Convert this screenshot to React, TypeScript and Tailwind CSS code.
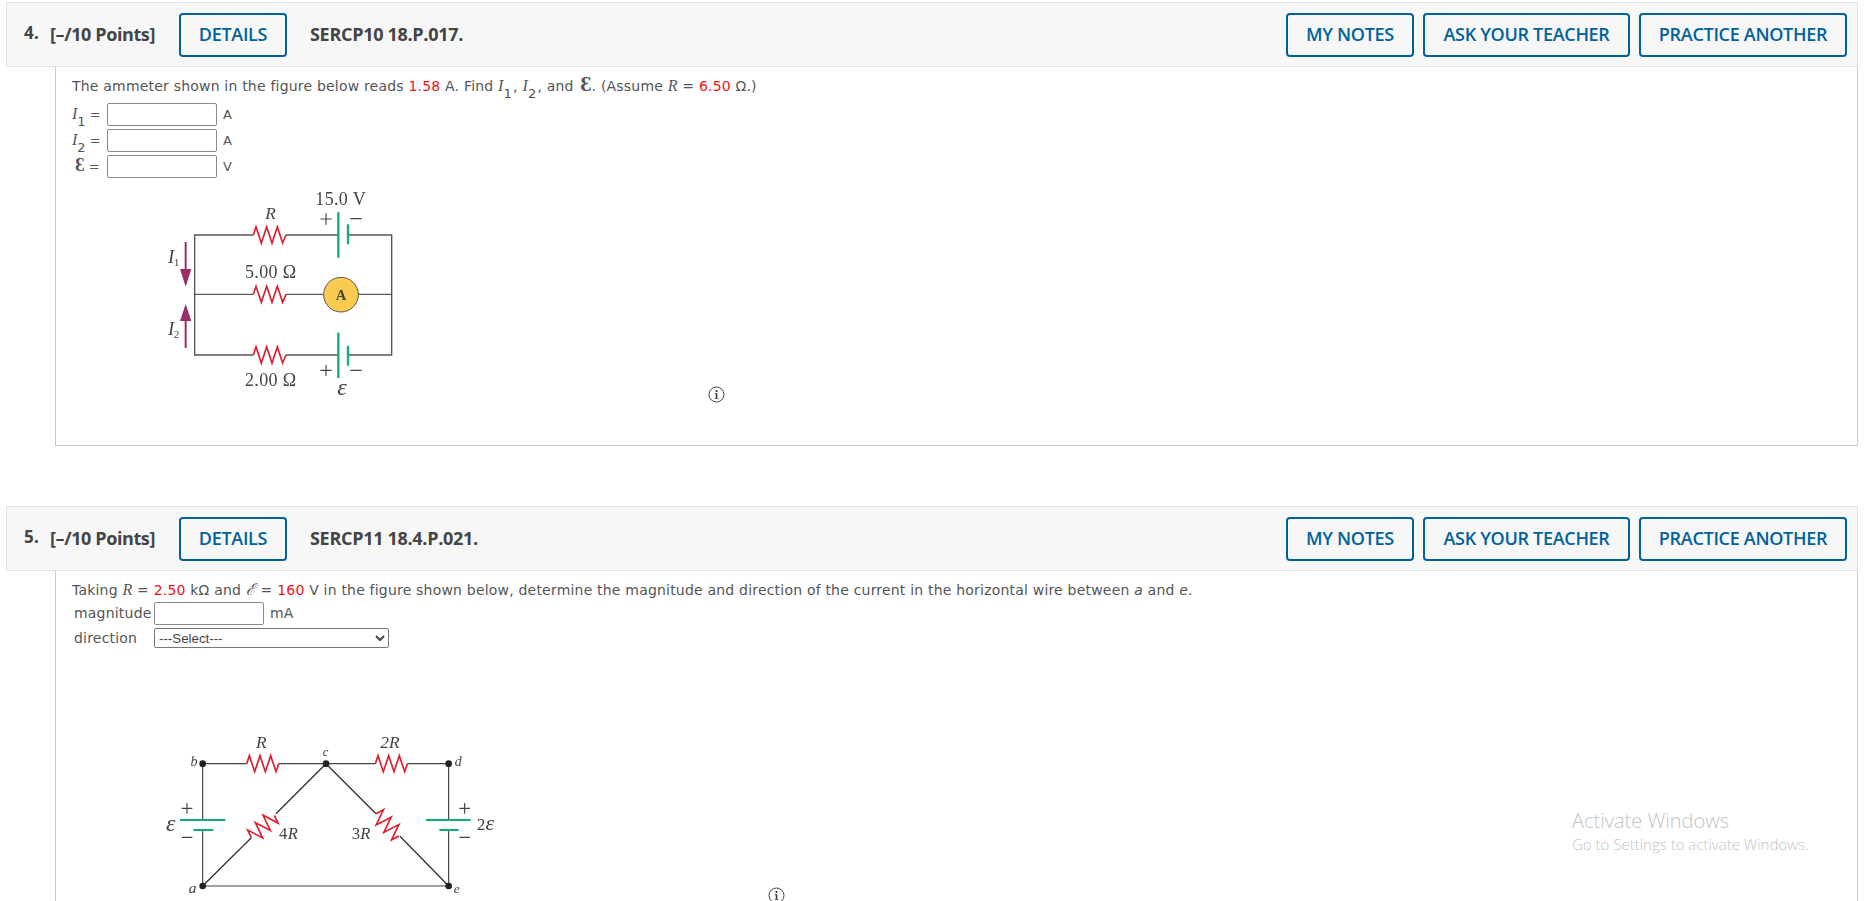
import React from "react";

const OS = "[font-family:'Open_Sans',sans-serif]";
const V = "[font-family:'DejaVu_Sans',sans-serif]";
const SERIF = "'Liberation Serif', 'DejaVu Serif', serif";

function Btn({ children, w }: { children: React.ReactNode; w: string }) {
  return (
    <button className={`${w} h-[44px] border-2 border-[#00629b] rounded-[4px] text-[#00629b] text-[18px] font-semibold flex items-center justify-center tracking-[-0.3px]`}>
      {children}
    </button>
  );
}

function Header({ n, code }: { n: string; code: string }) {
  return (
    <div className={`ml-[6px] mr-[16px] h-[65px] bg-[#f7f7f7] border border-[#e2e2e2] flex items-center text-[#444] ${OS}`}>
      <span className="ml-[17px] w-[26px] font-bold text-[17px] -mt-[4px]">{n}.</span>
      <span className="font-bold text-[18px] w-[129px] whitespace-nowrap tracking-[-0.4px]">[–/10 Points]</span>
      <Btn w="w-[108px]">DETAILS</Btn>
      <span className="ml-[23px] font-bold text-[18px] whitespace-nowrap tracking-[-0.3px]">{code}</span>
      <div className="ml-auto mr-[10px] flex gap-[9px]">
        <Btn w="w-[128px]">MY NOTES</Btn>
        <Btn w="w-[207px]">ASK YOUR TEACHER</Btn>
        <Btn w="w-[208px]">PRACTICE ANOTHER</Btn>
      </div>
    </div>
  );
}

function Info() {
  return (
    <svg width="17" height="17" viewBox="0 0 17 17" className="block">
      <circle cx="8.5" cy="8.5" r="7.5" fill="none" stroke="#444" strokeWidth="1" />
      <circle cx="8.5" cy="5" r="1.1" fill="#333" />
      <path d="M6.8 7.3h2.5v4.6h1.1v.9H6.7v-.9h1.1V8.2h-1z" fill="#333" />
    </svg>
  );
}

const Red = ({ children }: { children: React.ReactNode }) => <span className="text-[#f01414]">{children}</span>;
const It = ({ children }: { children: React.ReactNode }) => <i className="[font-family:'Liberation_Serif',serif] text-[16px] leading-none">{children}</i>;
const Sub = ({ children }: { children: React.ReactNode }) => <sub className="text-[13px] align-[-4px] leading-none">{children}</sub>;

function Field({ label, unit }: { label: React.ReactNode; unit: string }) {
  return (
    <div className="flex items-center h-[23px] mt-[3px]">
      <span className="w-[35px] text-[13px] tracking-normal whitespace-nowrap">{label}</span>
      <input className="w-[110px] h-[23px] bg-white border border-[#8a8a8a] rounded-[2px]" />
      <span className="ml-[6px] text-[13px]">{unit}</span>
    </div>
  );
}

function Zig({ x, y }: { x: number; y: number }) {
  const d = `M${x} ${y} l8 -24 l16 48 l16 -48 l16 48 l16 -48 l16 48 l10 -24`;
  return <path d={d} fill="none" stroke="#dc1f2e" strokeWidth="5" strokeLinejoin="miter" />;
}

function Circuit1() {
  const green = "#0fae7c";
  const purple = "#9a2d6b";
  const t = { fontFamily: SERIF, fill: "#444" } as const;
  return (
    <svg width="300" height="267" viewBox="0 24 900 801" className="block blur-[0.3px]">
      <path d="M340 195H164V555H340M438 195H594M626 195H755V555H626M594 555H438" fill="none" stroke="#555" strokeWidth="4" />
      <path d="M164 373H340M438 373H552M654 373H755" fill="none" stroke="#333" strokeWidth="3" />
      <Zig x={340} y={195} />
      <Zig x={340} y={373} />
      <Zig x={340} y={555} />
      <path d="M595 127V263M624 163V223M595 488V624M624 527V587" stroke={green} strokeWidth="7" fill="none" />
      <circle cx="603" cy="374" r="52" fill="#fbcb50" stroke="#555" strokeWidth="3" />
      <text x="603" y="390" textAnchor="middle" fontSize="44" fontWeight="bold" style={t}>A</text>
      <path d="M137 216V310" stroke={purple} strokeWidth="6" />
      <path d="M120 297H154L137 350Z" fill={purple} />
      <path d="M137 534V450" stroke={purple} strokeWidth="6" />
      <path d="M120 453H154L137 402Z" fill={purple} />
      <text x="602" y="106" textAnchor="middle" fontSize="54" letterSpacing="1" style={t}>15.0 V</text>
      <text x="392" y="147" textAnchor="middle" fontSize="52" fontStyle="italic" style={t}>R</text>
      <text x="392" y="324" textAnchor="middle" fontSize="54" letterSpacing="1" style={t}>5.00 Ω</text>
      <text x="392" y="649" textAnchor="middle" fontSize="54" letterSpacing="1" style={t}>2.00 Ω</text>
      <text x="84" y="278" fontSize="56" fontStyle="italic" style={t}>I</text>
      <text x="101" y="288" fontSize="34" style={t}>1</text>
      <text x="84" y="494" fontSize="56" fontStyle="italic" style={t}>I</text>
      <text x="101" y="504" fontSize="34" style={t}>2</text>
      <path d="M541 147H575M558 130V164M631 146H665M541 601H575M558 584V618M631 601H665" stroke="#444" strokeWidth="3.5" />
      <text x="606" y="674" textAnchor="middle" fontSize="72" fontStyle="italic" style={t}>ε</text>
    </svg>
  );
}

function Circuit2() {
  const green = "#12a97c";
  const t = { fontFamily: SERIF, fill: "#444" } as const;
  const zig = "M0 0l8 -24l16 48l16 -48l16 48l16 -48l16 48l8 -24";
  return (
    <svg width="380" height="181" viewBox="0 0 1140 543" className="block blur-[0.3px]">
      <path d="M158 128H290M386 128H676M772 128H896V297M896 327V495H158V327M158 297V128" fill="none" stroke="#444" strokeWidth="3.5" />
      <path d="M158 495L304 350M378 278L528 128L678 278M750 346L896 495" fill="none" stroke="#333" strokeWidth="4" />
      <path d={zig} transform="translate(290 128)" fill="none" stroke="#dc1f2e" strokeWidth="5" />
      <path d={zig} transform="translate(676 128)" fill="none" stroke="#dc1f2e" strokeWidth="5" />
      <path d={zig} transform="translate(304 350) rotate(-44)" fill="none" stroke="#dc1f2e" strokeWidth="5" />
      <path d={zig} transform="translate(678 278) rotate(44)" fill="none" stroke="#dc1f2e" strokeWidth="5" />
      <path d="M90 297H226M130 327H190M828 297H962M868 327H926" stroke={green} strokeWidth="6" fill="none" />
      <circle cx="158" cy="128" r="10" fill="#222" />
      <circle cx="528" cy="128" r="10" fill="#222" />
      <circle cx="896" cy="128" r="10" fill="#222" />
      <circle cx="158" cy="495" r="10" fill="#222" />
      <circle cx="896" cy="495" r="10" fill="#222" />
      <text x="334" y="82" textAnchor="middle" fontSize="52" fontStyle="italic" style={t}>R</text>
      <text x="720" y="82" textAnchor="middle" fontSize="52" fontStyle="italic" style={t}>2R</text>
      <text x="132" y="136" textAnchor="middle" fontSize="42" fontStyle="italic" style={t}>b</text>
      <text x="527" y="106" textAnchor="middle" fontSize="38" fontStyle="italic" style={t}>c</text>
      <text x="925" y="136" textAnchor="middle" fontSize="42" fontStyle="italic" style={t}>d</text>
      <text x="128" y="515" textAnchor="middle" fontSize="46" fontStyle="italic" style={t}>a</text>
      <text x="920" y="516" textAnchor="middle" fontSize="40" fontStyle="italic" style={t}>e</text>
      <text x="387" y="354" fontSize="50" letterSpacing="1" style={t}>4<tspan fontStyle="italic">R</tspan></text>
      <text x="605" y="354" fontSize="50" letterSpacing="1" style={t}>3<tspan fontStyle="italic">R</tspan></text>
      <text x="62" y="330" textAnchor="middle" fontSize="72" fontStyle="italic" style={t}>ε</text>
      <text x="980" y="328" fontSize="52" style={t}>2<tspan fontSize="66" fontStyle="italic">ε</tspan></text>
      <path d="M95 262H127M111 246V278M95 349H127M928 262H960M944 246V278M928 349H960" stroke="#444" strokeWidth="3.5" />
    </svg>
  );
}

export default function App() {
  return (
    <div className={`relative h-screen overflow-hidden bg-white pt-[2px] text-[14px] tracking-[0.2px] text-[#555] ${V}`}>
      <Header n="4" code="SERCP10 18.P.017." />
      <div className="ml-[55px] mr-[16px] h-[379px] border-l border-r border-b border-[#c9c9c9] pl-[16px]">
        <p className="h-[31px] flex items-center pt-[6px] whitespace-pre">
          <span>The ammeter shown in the figure below reads <Red>1.58</Red> A. Find <It>I</It><Sub>1</Sub><span className="ml-[1px]">,</span> <It>I</It><Sub>2</Sub><span className="ml-[1px]">,</span> and <span className="text-[21px] leading-none [font-family:'Liberation_Serif',serif] font-bold ml-[2px]">Ɛ</span>. (Assume <It>R</It> = <Red>6.50</Red> Ω.)</span>
        </p>
        <div className="pt-[2px]">
          <Field label={<><It>I</It><Sub>1</Sub> =</>} unit="A" />
          <Field label={<><It>I</It><Sub>2</Sub> =</>} unit="A" />
          <Field label={<><span className="text-[18px] ml-[3px] leading-none [font-family:'Liberation_Serif',serif] font-bold">Ɛ</span> =</>} unit="V" />
        </div>
        <div className="flex items-end">
          <div className="ml-[68px]"><Circuit1 /></div>
          <div className="ml-[268px] mb-[42px]"><Info /></div>
        </div>
      </div>
      <div className="h-[60px]" />
      <Header n="5" code="SERCP11 18.4.P.021." />
      <div className="ml-[55px] mr-[16px] h-[400px] border-l border-r border-[#c9c9c9] pl-[16px]">
        <p className="h-[31px] flex items-center pt-[7px] whitespace-pre">
          <span>Taking <It>R</It> = <Red>2.50</Red> kΩ and <span className="italic [font-family:'Liberation_Serif',serif] text-[16px] leading-none">ℰ</span> = <Red>160</Red> V in the figure shown below, determine the magnitude and direction of the current in the horizontal wire between <i>a</i> and <i>e</i>.</span>
        </p>
        <div className="flex items-center h-[23px] -mb-[1px]">
          <span className="ml-[2px] w-[80px] whitespace-nowrap">magnitude</span>
          <input className="w-[110px] h-[23px] bg-white border border-[#8a8a8a] rounded-[2px]" />
          <span className="ml-[6px]">mA</span>
        </div>
        <div className="flex items-center h-[24px] mt-[2px]">
          <span className="ml-[2px] w-[80px]">direction</span>
          <select className="w-[235px] h-[20px] bg-white border border-[#777] rounded-[2px] text-[13.3px] tracking-normal text-[#444] [font-family:'Liberation_Sans',sans-serif]" defaultValue="s">
            <option value="s">---Select---</option>
          </select>
        </div>
        <div className="flex items-start">
          <div className="ml-[78px] mt-[71px]"><Circuit2 /></div>
          <div className="ml-[238px] mt-[237px]"><Info /></div>
        </div>
      </div>
      <div className="absolute left-[1572px] top-[807px] [font-family:'Open_Sans',sans-serif] tracking-normal text-[#c4c4c4] pointer-events-none">
        <div className="text-[20px] leading-[28px] font-light">Activate Windows</div>
        <div className="text-[15px] leading-[18px] font-light">Go to Settings to activate Windows.</div>
      </div>
    </div>
  );
}
